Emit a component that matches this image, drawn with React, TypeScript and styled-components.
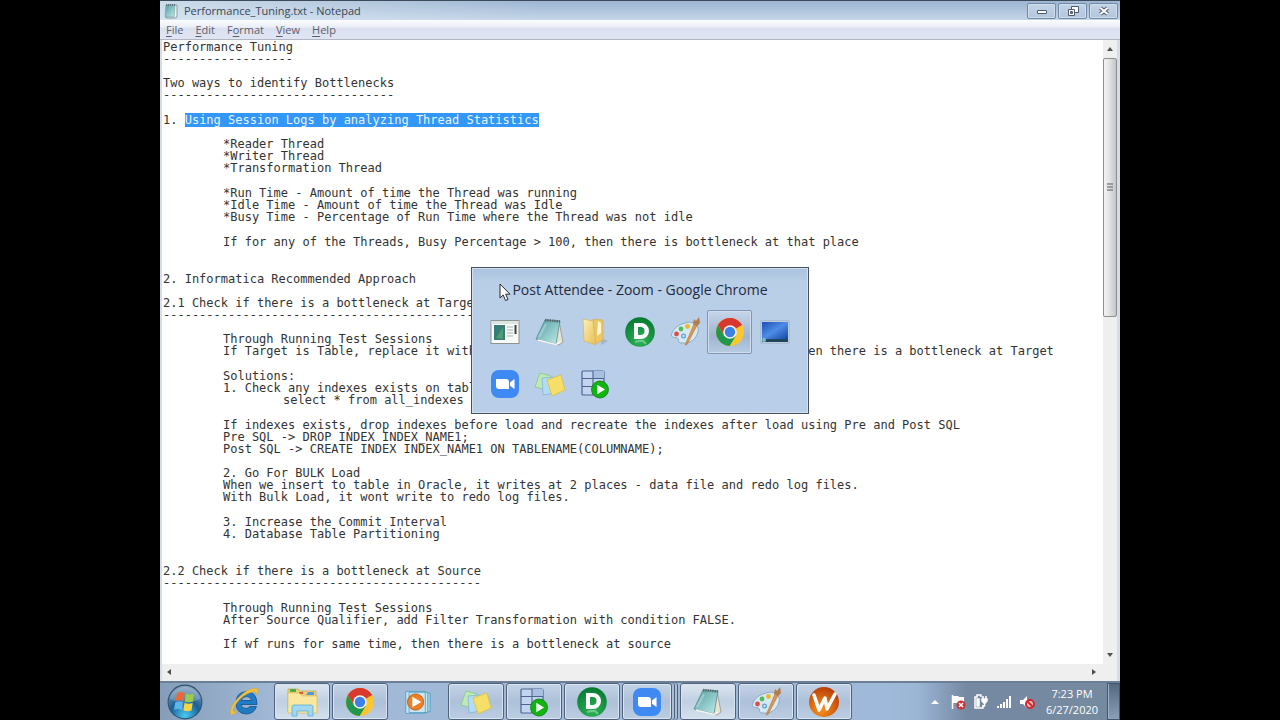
import React from "react";
import styled, { createGlobalStyle, css } from "styled-components";

const GlobalStyle = createGlobalStyle`
  * { box-sizing: border-box; }
  body { margin: 0; background: #000; }
  button { font: inherit; color: inherit; padding: 0; margin: 0; border: 0; background: none; }
`;

const ui = `"Open Sans", "Noto Sans", sans-serif`;

/* ---------- shell ---------- */

const Desktop = styled.div`
  position: relative;
  display: flex;
  flex-direction: column;
  width: 75%;
  min-height: 100vh;
  margin: 0 auto;
  overflow: hidden;
  background: #8fa9c6;
  font-family: ${ui};
`;

const Window = styled.section`
  flex: 1;
  display: flex;
  flex-direction: column;
  border-top: 1px solid #3d4a5a;
`;

const TitleBar = styled.header`
  display: flex;
  align-items: center;
  gap: 6px;
  height: 19px;
  padding: 0 2px 0 4px;
  background: linear-gradient(90deg, rgba(222, 234, 245, 0.7), rgba(190, 208, 228, 0) 40%),
    linear-gradient(#9db5d0, #b4c8df 60%, #c6d6e8);
`;

const Title = styled.h1`
  flex: 1;
  margin: 0;
  font-size: 11px;
  line-height: 16px;
  font-weight: 400;
  color: #3b4653;
`;

const Controls = styled.div`
  display: flex;
  gap: 2px;
`;

const ControlButton = styled.button`
  display: grid;
  place-items: center;
  width: 29px;
  height: 16px;
  border: 1px solid #7388a5;
  border-radius: 2px;
  background: linear-gradient(#c3d4e7, #b1c5dc);
  box-shadow: inset 0 0 0 1px #cfddec;
`;

const MenuBar = styled.nav`
  display: flex;
  gap: 12px;
  height: 20px;
  padding: 0 6px;
  border-bottom: 1px solid #b2b6c0;
  background: linear-gradient(#fbfcfe, #eceff8 35%, #dbe1f1 45%, #dfe5f3);
`;

const MenuItem = styled.button`
  font-size: 11px;
  line-height: 17px;
  color: #5c6068;
  u { text-underline-offset: 2px; }
`;

const Body = styled.div`
  flex: 1;
  display: flex;
  border: solid #d6dde8;
  border-width: 0 3px 0 2px;
  background: #fff;
`;

const Document = styled.main`
  flex: 1;
  min-width: 0;
  padding: 1px 1px 0;
  font-family: "DejaVu Sans Mono", "Liberation Mono", monospace;
  font-size: 12px;
  line-height: 12px;
  color: #333;
`;

const gaps = { none: 0, line: 12, wide: 13, section: 25 };
type Gap = keyof typeof gaps;

const Block = styled.div<{ $gap: Gap; $indent?: boolean }>`
  margin-bottom: ${(p) => gaps[p.$gap]}px;
  padding-left: ${(p) => (p.$indent ? 60 : 0)}px;
`;

const Line = styled.p<{ $indent?: boolean }>`
  margin: 0;
  padding-left: ${(p) => (p.$indent ? 60 : 0)}px;
  white-space: pre;
`;

const Selected = styled.mark`
  background: #3397f7;
  color: #e6f3ff;
`;

/* ---------- scroll bars ---------- */

const VScroll = styled.div`
  display: flex;
  flex-direction: column;
  width: 14px;
  background: #efefef;
`;

const ArrowButton = styled.button`
  display: grid;
  place-items: center;
  width: 14px;
  height: 18px;
`;

const Track = styled.div`
  flex: 1;
`;

const Thumb = styled.div`
  display: grid;
  place-items: center;
  height: 44%;
  border: 1px solid #8f8f8f;
  border-radius: 2px;
  background: linear-gradient(90deg, #f4f4f4, #e3e3e5 45%, #c4c5c9);
`;

const HScroll = styled.div`
  display: flex;
  justify-content: space-between;
  align-items: center;
  height: 17px;
  padding: 0 16px 2px 0;
  border: solid #d6dde8;
  border-width: 0 3px 0 2px;
  background: #efefef;
  ${ArrowButton} { height: 14px; }
`;

/* ---------- task switcher ---------- */

const Switcher = styled.section`
  position: absolute;
  top: 267px;
  left: 50%;
  width: 338px;
  height: 147px;
  margin-left: -169px;
  padding: 12px 10px 0;
  border: 1px solid #46525f;
  background: linear-gradient(#a9c2de, #b9cee7 14px, #b9cfe9);
  box-shadow: inset 0 0 0 1px #d3e0ee;
`;

const SwitcherTitle = styled.h2`
  margin: 0 0 10px;
  font-size: 14px;
  line-height: 20px;
  font-weight: 400;
  text-align: center;
  color: #1f2b3b;
`;

const SwitcherGrid = styled.div`
  display: grid;
  grid-template-columns: repeat(7, 45px);
  grid-auto-rows: 44px;
  row-gap: 8px;
`;

const SwitcherItem = styled.button<{ $active?: boolean }>`
  display: grid;
  place-items: center;
  border-radius: 2px;
  ${(p) =>
    p.$active &&
    css`
      border: 1px solid #8196b3;
      background: linear-gradient(#c6d6e9, #9fb5d1 60%, #b7cbe2);
      box-shadow: inset 0 0 0 1px #cfdded;
    `}
`;

const Pointer = styled.svg`
  position: absolute;
  top: 15px;
  left: 27px;
`;

/* ---------- task bar ---------- */

const TaskBar = styled.footer`
  display: flex;
  align-items: stretch;
  gap: 2px;
  height: 39px;
  border-top: 2px solid #6c7f97;
  background: linear-gradient(90deg, #869db9, #a1b9d6 12%, #9fb9da 76%, #9bb5d5 79%, #7589a3 84%, #75899f);
`;

const StartButton = styled.button`
  display: grid;
  place-items: center;
  width: 54px;
  padding-right: 4px;
`;

const TaskButton = styled.button<{ $open?: boolean; $stacked?: boolean; $active?: boolean }>`
  display: grid;
  place-items: center;
  width: 56px;
  ${(p) =>
    p.$open &&
    css`
      border: 1px solid #50627a;
      border-radius: 3px;
      background: ${p.$active
        ? "linear-gradient(#dbe5f0, #c0d0e2 50%, #d4e0ec)"
        : "linear-gradient(#c4d3e6, #adc1da 50%, #bccde2)"};
      box-shadow: inset 0 0 0 1px #d9e5f2;
    `}
  ${(p) =>
    p.$stacked &&
    css`
      width: 50px;
      margin-right: 6px;
      box-shadow: inset 0 0 0 1px #d9e5f2, 2px 0 0 #a9bdd5, 3px 0 0 #50627a, 5px 0 0 #a9bdd5, 6px 0 0 #50627a;
    `}
`;

const Tray = styled.div`
  display: flex;
  align-items: center;
  gap: 7px;
  margin-left: auto;
`;

const TrayButton = styled.button`
  display: grid;
  place-items: center;
  width: 16px;
  height: 20px;
`;

const Clock = styled.time`
  width: 66px;
  margin-left: -3px;
  font-size: 11px;
  line-height: 16px;
  text-align: center;
  color: #fff;
`;

const ShowDesktop = styled.button`
  width: 13px;
  border: 1px solid #43566c;
  background: linear-gradient(#54687f, #8ba0b8);
  box-shadow: inset 1px 0 0 #9fb2c8;
`;

/* ---------- icons ---------- */

const Gradients = styled.svg`
  position: absolute;
`;

const Defs = () => (
  <Gradients width="0" height="0" aria-hidden="true">
    <defs>
      <linearGradient id="teal" x1="0" y1="0" x2="1" y2="1">
        <stop offset="0" stopColor="#4f9c9f" /><stop offset="1" stopColor="#c2ecea" />
      </linearGradient>
      <radialGradient id="green" cx=".5" cy=".8" r=".8">
        <stop offset="0" stopColor="#2fb45a" /><stop offset="1" stopColor="#05792f" />
      </radialGradient>
      <radialGradient id="orb" cx=".5" cy=".9" r=".9">
        <stop offset="0" stopColor="#49c8f2" /><stop offset=".5" stopColor="#1c5f96" /><stop offset="1" stopColor="#8da6bb" />
      </radialGradient>
      <linearGradient id="folder" x1="0" y1="0" x2="1" y2="1">
        <stop offset="0" stopColor="#fdf0b4" /><stop offset="1" stopColor="#e6bd55" />
      </linearGradient>
      <linearGradient id="screen" x1="0" y1="0" x2="1" y2="1">
        <stop offset="0" stopColor="#1c4fb4" /><stop offset=".5" stopColor="#4e8ce6" /><stop offset="1" stopColor="#1545a5" />
      </linearGradient>
      <radialGradient id="orange" cx=".4" cy=".75" r=".8">
        <stop offset="0" stopColor="#f8931d" /><stop offset="1" stopColor="#b53a05" />
      </radialGradient>
    </defs>
  </Gradients>
);

const icon = (size: number, children: React.ReactNode) => (
  <svg width={size} height={size} viewBox="0 0 32 32" aria-hidden="true">{children}</svg>
);

const ChromeIcon = () => icon(32, <>
  <circle cx="16" cy="16" r="14" fill="#fbc62f" />
  <path d="M16 16 3.9 9A14 14 0 0 1 28.1 9Z" fill="#d9392d" />
  <path d="M16 9H28.1A14 14 0 0 0 3.9 9L10 19.5Z" fill="#d9392d" />
  <path d="M3.9 9A14 14 0 0 0 15.6 30L22 19.5 16 22 10 19.5Z" fill="#20974c" />
  <circle cx="16" cy="16" r="6.8" fill="#f2f5f3" />
  <circle cx="16" cy="16" r="5.2" fill="#3f7fe8" />
</>);

const NotepadIcon = () => icon(32, <>
  <path d="M25 5 29 26 25 29 21 28Z" fill="#e8e2d2" stroke="#8a8a80" strokeWidth=".7" />
  <path d="M11 4 26 5 22 28 2 23Z" fill="url(#teal)" stroke="#5c8a8e" strokeWidth=".8" />
  <path d="M4 24 22 28.5 26 26" fill="none" stroke="#f5f5ef" strokeWidth="1.5" />
  <path d="M11 4 26 5.5" stroke="#54676b" strokeWidth="2.5" strokeDasharray="1.5 .8" />
  <path d="M12 8 5 21" stroke="#ffffff" strokeOpacity=".3" strokeWidth="2" />
</>);

const ZoomIcon = () => icon(32, <>
  <rect x="2" y="2" width="28" height="28" rx="8" fill="#3f8af2" />
  <path d="M7 11H17Q20 11 20 14V21H10Q7 21 7 18Z" fill="#fff" />
  <path d="M21 14.5 25.5 11V21L21 17.8Z" fill="#fff" />
</>);

const StickyIcon = () => icon(32, <>
  <path d="M6 5 17 8 13 22 1 19Z" fill="#c0eab3" stroke="#85c688" strokeWidth=".8" />
  <path d="M8 10 20 9 21 25 9 27Z" fill="#b3dcf2" stroke="#83b3d4" strokeWidth=".8" />
  <path d="M13 12 27 7 31 22 18 28Z" fill="#f6df68" stroke="#d9bd45" strokeWidth=".8" />
</>);

const GridPlayIcon = () => icon(32, <>
  <rect x="3" y="3" width="22" height="24" rx="1" fill="#c2d4ef" stroke="#4d6490" strokeWidth="1.2" />
  <path d="M14 3H25V10H14Z" fill="#a9bfe2" />
  <path d="M3 10.5H25M3 18.5H25M14 3V27" stroke="#4d6490" strokeWidth="1.1" />
  <circle cx="21" cy="21.5" r="8.5" fill="#12b412" stroke="#0c7d10" strokeWidth=".8" />
  <path d="M18.3 16.8 26 21.5 18.3 26.3Z" fill="#fff" />
</>);

const DIcon = () => icon(32, <>
  <circle cx="16" cy="16" r="14.8" fill="url(#green)" />
  <path d="M10 7H17A7.5 7.5 0 0 1 17 23H10Z M14 11V19H16.5A4 4 0 0 0 16.5 11Z" fill="#fff" fillRule="evenodd" />
  <path d="M11 26 15 25H19L22 28" stroke="#8fd6a2" strokeOpacity=".7" strokeWidth="2" fill="none" />
</>);

const PaintIcon = () => icon(32, <>
  <path d="M16 7C24 4 31 9 29 16S22 28 12 27C8 27 11 23 8 22S1 22 3 17 9 9 16 7Z" fill="#d4e9f4" stroke="#84a5ba" strokeWidth=".9" />
  <circle cx="7.5" cy="18" r="2.4" fill="#d94e48" />
  <circle cx="12" cy="13" r="2.4" fill="#57b955" />
  <circle cx="18.5" cy="10.5" r="2.4" fill="#efb727" />
  <circle cx="14.5" cy="20" r="2.5" fill="#5f9fd4" /><circle cx="14.5" cy="20" r="1.2" fill="#d4e9f4" />
  <path d="M16 29 25 8 28 9.5 18 28.5Z" fill="#dc9550" stroke="#ad6a30" strokeWidth=".5" />
  <path d="M24 8 25 3 27 5 30 1 31 7 28 10Z" fill="#b47b4b" />
</>);

const DetailIcon = () => icon(32, <>
  <rect x="2" y="4.500" width="28" height="23" fill="#f8faf8" stroke="#8c9491" />
  <path d="M2.500 5H29.500V8H2.500Z" fill="#dce3e3" />
  <rect x="5" y="9" width="11" height="15" fill="#387c79" />
  <path d="M7 22 14 11V23Z" fill="#4c9d70" />
  <path d="M18 11H24M18 14H24M18 17H24M18 20H24" stroke="#a8afaf" />
  <path d="M26.500 9V18" stroke="#36454a" strokeWidth="2" />
</>);

const FolderIcon = () => icon(32, <>
  <path d="M22 22 29 25 22 29Z" fill="#98a5b3" fillOpacity=".6" />
  <path d="M14 3 24 4V24L16 28Z" fill="#ecc766" stroke="#d4a949" strokeWidth=".6" />
  <path d="M19 5 22 7V17L18 20Z" fill="#fff7d2" />
  <path d="M4 3 14 5 17 29 5 25Z" fill="url(#folder)" stroke="#d9b358" strokeWidth=".7" />
</>);

const DesktopIcon = () => icon(32, <>
  <rect x="2" y="5" width="28" height="22" fill="#d9e4ef" stroke="#8395aa" strokeWidth=".6" />
  <rect x="3" y="6" width="26" height="17" fill="url(#screen)" />
  <rect x="3" y="23" width="26" height="3" fill="#21455d" /><circle cx="5" cy="24" r="2" fill="#7dbec8" />
</>);

const StartIcon = () => icon(36, <>
  <circle cx="16" cy="16" r="15" fill="url(#orb)" stroke="#315474" />
  <path d="M2.500 13A14 14 0 0 1 29.500 13Q16 20 2.500 13Z" fill="#fff" fillOpacity=".22" />
  <path d="M9 8Q12 6 15.500 8L14.500 15Q11 13.500 7.500 15Z" fill="#ee6836" />
  <path d="M16.800 8.500Q20 10 24 8.500L23 15.500Q19 17 15.800 15.300Z" fill="#9ccb48" />
  <path d="M7.200 16.500Q11 14.700 14.300 16.500L13.300 23Q9.500 21.500 6.300 23Z" fill="#5bb5ec" />
  <path d="M15.600 16.700Q19 18.300 22.800 16.800L21.800 23.500Q18 25 14.600 23.400Z" fill="#fbd441" />
</>);

const IeIcon = () => icon(32, <>
  <path d="M29 18.500H13Q13.500 22.500 18 22.500 20.500 22.500 22 20.500H28.500Q26 28 18 28 8 27.500 8 17T18 5.500Q29 5.500 29 18.500ZM13.200 14.500H23.500Q23 10.500 18.500 10.500T13.200 14.500Z" fill="#1f7cc4" stroke="#12508c" strokeWidth=".8" fillRule="evenodd" />
  <path d="M10 24Q4 31 2.500 28 1 21 11 11T29 2.500Q32 4 28 9 29 5 24.500 6 15 8 8 18 1 29 10 24Z" fill="#f2c13c" stroke="#c79735" strokeWidth=".4" />
</>);

const ExplorerIcon = () => icon(32, <>
  <path d="M2 3H12L14 5H30V26H2Z" fill="#eed17a" stroke="#c1a04e" strokeWidth=".7" />
  <path d="M4 3H10V6H4Z" fill="#51ac44" /><path d="M13 6H17V8H13Z" fill="#dd5b40" /><path d="M22 6H28V9H20Z" fill="#5299d8" />
  <path d="M2 7H13L16 10H31V27H2Z" fill="#fae8a0" stroke="#d3b763" strokeWidth=".6" />
  <path d="M6 30V21Q6 19 8 19H25Q27 19 27 21V30H22V25H11V30Z" fill="#9fd8f0" stroke="#5caed4" strokeWidth=".8" />
</>);

const MediaIcon = () => icon(26, <>
  <path d="M10 5H31V28H10Z" fill="#a6d2e8" stroke="#4c9bc0" />
  <path d="M5 4H28V29H5ZM1 3H25V30H1Z" fill="#c9e5f2" stroke="#4c9bc0" />
  <circle cx="13" cy="16" r="10" fill="#ee7f22" stroke="#b9591b" />
  <path d="M9 9.500 20 16 9 22.500Z" fill="#fff" />
</>);

const WIcon = () => icon(32, <>
  <circle cx="16" cy="16" r="15" fill="url(#orange)" />
  <path d="M6 9 11 24 17 12 19 23 27 8" fill="none" stroke="#fff" strokeWidth="3.500" strokeLinejoin="round" strokeLinecap="round" />
</>);

const Arrow = ({ d }: { d: string }) => (
  <svg width="8" height="8" viewBox="0 0 8 8" aria-hidden="true"><path d={d} fill="#4c4f54" /></svg>
);

const trayIcons: [string, React.ReactNode][] = [
  ["Show hidden icons", <path key="a" d="M4 10 8 6 12 10Z" fill="#fff" />],
  ["Action Center", <g key="b">
    <path d="M2.500 1V15" stroke="#fff" strokeWidth="1.500" />
    <path d="M3 2H8L9 3H14V10H9L8 9H3Z" fill="#fff" />
    <circle cx="11" cy="11" r="4.500" fill="#cf3034" /><path d="m9 9 4 4m0-4-4 4" stroke="#fff" strokeWidth="1.500" />
  </g>],
  ["Power", <g key="c" fill="none" stroke="#fff" strokeWidth="1.500">
    <path d="M8 3V1H4V3H2V14H10V11" /><path d="M4 5H6V12H4Z" fill="#fff" />
    <path d="M10 2V5M13 2V5M11.500 9V12H9" /><path d="M9 5H14V7L12 9H11L9 7Z" fill="#fff" />
  </g>],
  ["Network", <g key="d" fill="#fff">
    <path d="M1 12H3V14H1ZM4 10H6V14H4ZM7 8H9V14H7ZM10 5H12V14H10ZM13 2H15V14H13Z" />
  </g>],
  ["Volume muted", <g key="e">
    <path d="M1 6H4L8 2V14L4 10H1Z" fill="#fff" />
    <circle cx="11" cy="10" r="4" fill="#f1c9c9" stroke="#d32630" strokeWidth="2" /><path d="m8.500 7.500 5 5" stroke="#d32630" strokeWidth="2" />
  </g>],
];

/* ---------- content ---------- */

type TextBlock = { lines: React.ReactNode[]; gap: Gap; indent?: boolean };

const rule = (n: number) => "-".repeat(n);

const text: TextBlock[] = [
  { lines: ["Performance Tuning", rule(18)], gap: "line" },
  { lines: ["Two ways to identify Bottlenecks", rule(32)], gap: "wide" },
  { lines: [<>1. <Selected>Using Session Logs by analyzing Thread Statistics</Selected></>], gap: "line" },
  { lines: ["*Reader Thread", "*Writer Thread", "*Transformation Thread"], gap: "wide", indent: true },
  {
    lines: [
      "*Run Time - Amount of time the Thread was running",
      "*Idle Time - Amount of time the Thread was Idle",
      "*Busy Time - Percentage of Run Time where the Thread was not idle",
    ],
    gap: "wide",
    indent: true,
  },
  { lines: ["If for any of the Threads, Busy Percentage > 100, then there is bottleneck at that place"], gap: "section", indent: true },
  { lines: ["2. Informatica Recommended Approach"], gap: "line" },
  { lines: ["2.1 Check if there is a bottleneck at Target", rule(44)], gap: "line" },
  {
    lines: [
      "Through Running Test Sessions",
      "If Target is Table, replace it with a flat file target. If workflow runs fast, then there is a bottleneck at Target",
    ],
    gap: "wide",
    indent: true,
  },
  { lines: ["Solutions:", "1. Check any indexes exists on table"], gap: "none", indent: true },
  { lines: [<Line as="span" key="s" $indent>select * from all_indexes</Line>], gap: "wide", indent: true },
  {
    lines: [
      "If indexes exists, drop indexes before load and recreate the indexes after load using Pre and Post SQL",
      "Pre SQL -> DROP INDEX INDEX_NAME1;",
      "Post SQL -> CREATE INDEX INDEX_NAME1 ON TABLENAME(COLUMNAME);",
    ],
    gap: "line",
    indent: true,
  },
  {
    lines: [
      "2. Go For BULK Load",
      "When we insert to table in Oracle, it writes at 2 places - data file and redo log files.",
      "With Bulk Load, it wont write to redo log files.",
    ],
    gap: "wide",
    indent: true,
  },
  { lines: ["3. Increase the Commit Interval", "4. Database Table Partitioning"], gap: "section", indent: true },
  { lines: ["2.2 Check if there is a bottleneck at Source", rule(44)], gap: "wide" },
  {
    lines: ["Through Running Test Sessions", "After Source Qualifier, add Filter Transformation with condition FALSE."],
    gap: "line",
    indent: true,
  },
  { lines: ["If wf runs for same time, then there is a bottleneck at source"], gap: "none", indent: true },
];

const switcherItems: [string, React.ComponentType][] = [
  ["Details", DetailIcon],
  ["Notepad", NotepadIcon],
  ["Folder", FolderIcon],
  ["Designer", DIcon],
  ["Paint", PaintIcon],
  ["Google Chrome", ChromeIcon],
  ["Desktop", DesktopIcon],
  ["Zoom", ZoomIcon],
  ["Sticky Notes", StickyIcon],
  ["Session Runner", GridPlayIcon],
];

const tasks: { name: string; Icon: React.ComponentType; open?: boolean; stacked?: boolean; active?: boolean }[] = [
  { name: "Internet Explorer", Icon: IeIcon },
  { name: "Windows Explorer", Icon: ExplorerIcon, open: true, active: true },
  { name: "Google Chrome", Icon: ChromeIcon, open: true },
  { name: "Media Player", Icon: MediaIcon },
  { name: "Sticky Notes", Icon: StickyIcon, open: true },
  { name: "Session Runner", Icon: GridPlayIcon, open: true },
  { name: "Designer", Icon: DIcon, open: true },
  { name: "Zoom", Icon: ZoomIcon, open: true, stacked: true },
  { name: "Notepad", Icon: NotepadIcon, open: true, active: true },
  { name: "Paint", Icon: PaintIcon, open: true },
  { name: "Workflow", Icon: WIcon, open: true },
];

export default function App() {
  return (
    <>
      <GlobalStyle />
      <Desktop>
        <Defs />
        <Window>
          <TitleBar>
            <svg width="14" height="16" viewBox="0 0 14 16" aria-hidden="true">
              <path d="M3 2H13V14L11 15H2Z" fill="#eef3f0" stroke="#667f86" strokeWidth=".7" />
              <path d="M2 2H11L10 14H1Z" fill="url(#teal)" stroke="#6b9ca3" strokeWidth=".6" />
              <path d="M2 2H12" stroke="#637981" strokeDasharray="1 1" strokeWidth="2" />
            </svg>
            <Title>Performance_Tuning.txt - Notepad</Title>
            <Controls>
              <ControlButton aria-label="Minimize">
                <svg width="12" height="10" viewBox="0 0 12 10"><rect x="1.500" y="4.500" width="9" height="3" rx=".5" fill="#fff" stroke="#4d5a6b" /></svg>
              </ControlButton>
              <ControlButton aria-label="Restore">
                <svg width="12" height="12" viewBox="0 0 12 12" fill="#fff" stroke="#4d5a6b">
                  <path d="M4.500 1.500H11.500V7.500H4.500Z" /><path d="M1.500 4.500H7.500V10.500H1.500ZM3.500 6.500V8.500H5.500V6.500Z" />
                </svg>
              </ControlButton>
              <ControlButton aria-label="Close">
                <svg width="12" height="10" viewBox="0 0 12 10">
                  <path d="m2.500 2 7 6m0-6-7 6" stroke="#4d5a6b" strokeWidth="4" /><path d="m2.500 2 7 6m0-6-7 6" stroke="#fff" strokeWidth="2" />
                </svg>
              </ControlButton>
            </Controls>
          </TitleBar>
          <MenuBar>
            <MenuItem><u>F</u>ile</MenuItem>
            <MenuItem><u>E</u>dit</MenuItem>
            <MenuItem>F<u>o</u>rmat</MenuItem>
            <MenuItem><u>V</u>iew</MenuItem>
            <MenuItem><u>H</u>elp</MenuItem>
          </MenuBar>
          <Body>
            <Document>
              {text.map((block, i) => (
                <Block key={i} $gap={block.gap} $indent={block.indent}>
                  {block.lines.map((line, j) => <Line key={j}>{line}</Line>)}
                </Block>
              ))}
            </Document>
            <VScroll>
              <ArrowButton aria-label="Scroll up"><Arrow d="M1 6 4 2 7 6Z" /></ArrowButton>
              <Track>
                <Thumb>
                  <svg width="7" height="8" viewBox="0 0 7 8" aria-hidden="true"><path d="M0 1H6M0 4H6M0 7H6" stroke="#52555a" /></svg>
                </Thumb>
              </Track>
              <ArrowButton aria-label="Scroll down"><Arrow d="M1 2H7L4 6Z" /></ArrowButton>
            </VScroll>
          </Body>
          <HScroll>
            <ArrowButton aria-label="Scroll left"><Arrow d="M6 1V7L2 4Z" /></ArrowButton>
            <ArrowButton aria-label="Scroll right"><Arrow d="M2 1V7L6 4Z" /></ArrowButton>
          </HScroll>
        </Window>
        <TaskBar>
          <StartButton aria-label="Start"><StartIcon /></StartButton>
          {tasks.map(({ name, Icon, open, stacked, active }) => (
            <TaskButton key={name} aria-label={name} $open={open} $stacked={stacked} $active={active}><Icon /></TaskButton>
          ))}
          <Tray>
            {trayIcons.map(([name, shape]) => (
              <TrayButton key={name} aria-label={name}>
                <svg width="16" height="16" viewBox="0 0 16 16">{shape}</svg>
              </TrayButton>
            ))}
            <Clock>7:23 PM<br />6/27/2020</Clock>
          </Tray>
          <ShowDesktop aria-label="Show desktop" />
        </TaskBar>
        <Switcher>
          <SwitcherTitle>Post Attendee - Zoom - Google Chrome</SwitcherTitle>
          <SwitcherGrid>
            {switcherItems.map(([name, Icon]) => (
              <SwitcherItem key={name} aria-label={name} $active={name === "Google Chrome"}><Icon /></SwitcherItem>
            ))}
          </SwitcherGrid>
          <Pointer width="12" height="19" viewBox="0 0 12 19" aria-hidden="true">
            <path d="M1 1V15L4.200 12 6.500 17.500 9 16.500 6.700 11.200H11Z" fill="#fff" stroke="#252b35" />
          </Pointer>
        </Switcher>
      </Desktop>
    </>
  );
}
